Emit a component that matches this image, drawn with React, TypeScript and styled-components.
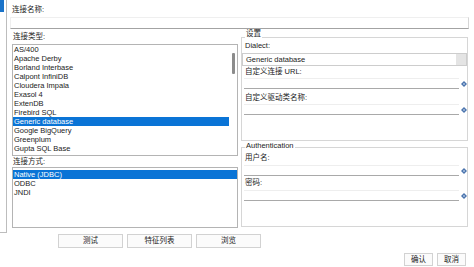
import React from "react";
import styled, { createGlobalStyle } from "styled-components";

const GlobalStyle = createGlobalStyle`
    html, body {
        margin: 0;
        padding: 0;
        background: #fff;
    }
    body {
        font-family: "Liberation Sans", "Noto Sans CJK SC", sans-serif;
        font-size: 7.5px;
        color: #1b1b1b;
    }
`;

const Window = styled.div`
    width: 474px;
    height: 267px;
    display: flex;
    flex-direction: column;
    overflow: hidden;
    background: #fff;
`;

const Top = styled.div`
    display: flex;
    height: 233px;
`;

const SideStrip = styled.div`
    flex: none;
    width: 7px;
    height: 233px;
    box-sizing: border-box;
    border-right: 1px solid #bdbdbd;
    border-bottom: 1px solid #bdbdbd;
`;

const BlueTab = styled.div`
    width: 4px;
    height: 12px;
    background: #1a73c9;
`;

const Main = styled.div`
    flex: 1;
    display: flex;
    flex-direction: column;
    padding: 0 5px 0 3px;
`;

const NameLabel = styled.div`
    padding: 4px 0 0 2px;
    line-height: 12px;
`;

const NameInput = styled.div`
    margin-top: 1px;
    height: 12px;
    box-sizing: border-box;
    border: 1px solid #efefef;
    border-bottom-color: #a3a3a3;
    border-right-color: #d6d6d6;
`;

const Columns = styled.div`
    display: grid;
    grid-template-columns: 226px 227px;
    column-gap: 3px;
    padding-left: 2px;
`;

const Column = styled.div`
    display: flex;
    flex-direction: column;
`;

const SectionLabel = styled.div<{ $top?: number }>`
    line-height: 11px;
    padding-left: 1px;
    margin-top: ${p => p.$top || 0}px;
`;

const ListBox = styled.div<{ $height: number; $top?: number; $padTop?: number }>`
    height: ${p => p.$height}px;
    margin-top: ${p => p.$top || 0}px;
    padding-top: ${p => p.$padTop || 0}px;
    box-sizing: border-box;
    border: 1px solid #b4b4b4;
    display: flex;
    overflow: hidden;
`;

const Items = styled.div`
    flex: 1;
    display: flex;
    flex-direction: column;
    overflow: hidden;
`;

const Item = styled.div<{ $selected?: boolean }>`
    flex: none;
    height: 9px;
    line-height: 9px;
    padding-left: 1px;
    white-space: nowrap;
    background: ${p => (p.$selected ? "#0a74d6" : "transparent")};
    color: ${p => (p.$selected ? "#fff" : "#1b1b1b")};
`;

const ScrollTrack = styled.div`
    flex: none;
    width: 8px;
    display: flex;
    justify-content: center;
    padding-top: 8px;
`;

const ScrollThumb = styled.div`
    width: 3px;
    height: 21px;
    background: #8c8c8c;
    border-radius: 1px;
`;

const Group = styled.div<{ $height: number; $top: number }>`
    height: ${p => p.$height}px;
    margin-top: ${p => p.$top}px;
    box-sizing: border-box;
    border: 1px solid #d6d6d6;
    display: flex;
    flex-direction: column;
`;

const Legend = styled.div<{ $top: number }>`
    align-self: flex-start;
    margin: ${p => p.$top}px 0 0 3px;
    padding: 0 1px;
    line-height: 10px;
    background: #fff;
`;

const FieldLabel = styled.div<{ $top?: number }>`
    line-height: 11px;
    padding-left: 3px;
    margin-top: ${p => p.$top || 0}px;
`;

const Combo = styled.div`
    margin-top: 2px;
    height: 13px;
    box-sizing: border-box;
    border: 1px solid #cdcdcd;
    display: flex;
    align-items: center;
`;

const ComboText = styled.div`
    flex: 1;
    padding-left: 3px;
    line-height: 11px;
`;

const ComboButton = styled.div`
    width: 10px;
    align-self: stretch;
    background: #e4e4e4;
`;

const InputRow = styled.div<{ $top?: number }>`
    display: flex;
    align-items: center;
    margin: ${p => p.$top || 0}px 0 0 2px;
`;

const TextInput = styled.div`
    flex: 1;
    height: 11px;
    box-sizing: border-box;
    border-top: 1px solid #eeeeee;
    border-bottom: 1px solid #a9a9a9;
`;

const IconSlot = styled.div`
    width: 7px;
    display: flex;
    justify-content: center;
    padding-left: 1px;
`;

const ActionRow = styled.div`
    display: flex;
    gap: 4px;
    margin-top: 1px;
    padding-left: 58px;
`;

const FooterRow = styled.div`
    display: flex;
    justify-content: flex-end;
    gap: 4px;
    margin-top: 5px;
    padding-right: 8px;
`;

const Button = styled.button<{ $width: number; $height: number }>`
    width: ${p => p.$width}px;
    height: ${p => p.$height}px;
    box-sizing: border-box;
    padding: 0;
    border: 1px solid #d2d2d2;
    background: #fbfbfb;
    font-family: inherit;
    font-size: 7.5px;
    line-height: 10px;
    color: #222;
`;

const VarIcon = () => (
    <svg width="6" height="6" viewBox="0 0 6 6">
        <path d="M3 0 L6 3 L3 6 L0 3 Z" fill="#4b74ad" />
        <circle cx="3" cy="3" r="1" fill="#a9c1e0" />
    </svg>
);

const drivers = [
    "AS/400",
    "Apache Derby",
    "Borland Interbase",
    "Calpont InfiniDB",
    "Cloudera Impala",
    "Exasol 4",
    "ExtenDB",
    "Firebird SQL",
    "Generic database",
    "Google BigQuery",
    "Greenplum",
    "Gupta SQL Base",
    "H2",
];

const accessTypes = ["Native (JDBC)", "ODBC", "JNDI"];

const Field = ({ label, top, inputTop }: { label: string; top?: number; inputTop?: number }) => (
    <>
        <FieldLabel $top={top}>{label}</FieldLabel>
        <InputRow $top={inputTop}>
            <TextInput />
            <IconSlot><VarIcon /></IconSlot>
        </InputRow>
    </>
);

export default function App() {
    return (
        <Window>
            <GlobalStyle />
            <Top>
                <SideStrip><BlueTab /></SideStrip>
                <Main>
                    <NameLabel>连接名称:</NameLabel>
                    <NameInput />
                    <Columns>
                        <Column>
                            <SectionLabel $top={2}>连接类型:</SectionLabel>
                            <ListBox $height={112} $top={2}>
                                <Items>
                                    {drivers.map(d => (
                                        <Item key={d} $selected={d === "Generic database"}>{d}</Item>
                                    ))}
                                </Items>
                                <ScrollTrack><ScrollThumb /></ScrollTrack>
                            </ListBox>
                            <SectionLabel>连接方式:</SectionLabel>
                            <ListBox $height={61} $padTop={2}>
                                <Items>
                                    {accessTypes.map(a => (
                                        <Item key={a} $selected={a === "Native (JDBC)"}>{a}</Item>
                                    ))}
                                </Items>
                            </ListBox>
                        </Column>
                        <Column>
                            <Group $height={104} $top={8}>
                                <Legend $top={-9}>设置</Legend>
                                <FieldLabel $top={1}>Dialect:</FieldLabel>
                                <Combo>
                                    <ComboText>Generic database</ComboText>
                                    <ComboButton />
                                </Combo>
                                <Field label="自定义连接 URL:" inputTop={1} />
                                <Field label="自定义驱动类名称:" top={3} inputTop={1} />
                            </Group>
                            <Group $height={80} $top={6}>
                                <Legend $top={-7}>Authentication</Legend>
                                <Field label="用户名:" top={1} inputTop={2} />
                                <Field label="密码:" top={1} inputTop={2} />
                            </Group>
                        </Column>
                    </Columns>
                </Main>
            </Top>
            <ActionRow>
                <Button $width={65} $height={14}>测试</Button>
                <Button $width={65} $height={14}>特征列表</Button>
                <Button $width={65} $height={14}>浏览</Button>
            </ActionRow>
            <FooterRow>
                <Button $width={29} $height={13}>确认</Button>
                <Button $width={29} $height={13}>取消</Button>
            </FooterRow>
        </Window>
    );
}
